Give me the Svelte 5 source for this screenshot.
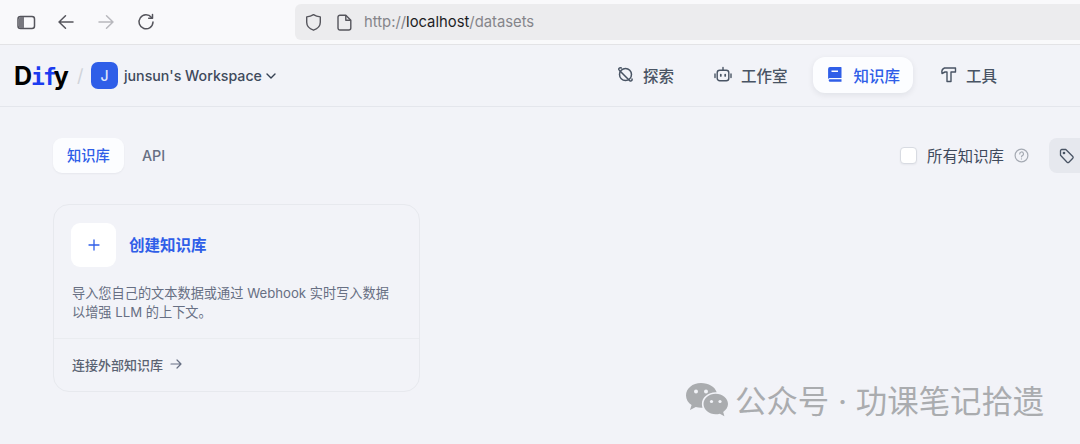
<script>
  const topNav = [
    { label: '探索', icon: 'explore' },
    { label: '工作室', icon: 'robot' },
    { label: '知识库', icon: 'book', active: true },
    { label: '工具', icon: 'tool' }
  ];
</script>

<div class="page">
  <div class="browser">
    <div class="controls">
      <svg width="19" height="15" viewBox="0 0 19 15" fill="none">
        <rect x="1" y="1.500" width="16.500" height="12" rx="2.500" stroke="#55555c" stroke-width="1.500" />
        <path d="M2 3.500a1.500 1.500 0 0 1 1.500-1.500H7v11H3.500A1.500 1.500 0 0 1 2 11.500z" fill="#77777e" />
      </svg>
      <svg class="back" width="18" height="16" viewBox="0 0 18 16" fill="none" stroke="#55555c" stroke-width="1.500" stroke-linecap="round" stroke-linejoin="round">
        <path d="M16 8H2M8.500 1.800 2 8l6.500 6.200" />
      </svg>
      <svg class="forward" width="18" height="16" viewBox="0 0 18 16" fill="none" stroke="#b8b8bd" stroke-width="1.500" stroke-linecap="round" stroke-linejoin="round">
        <path d="M2 8h14M9.500 1.800 16 8l-6.500 6.200" />
      </svg>
      <svg class="reload" width="18" height="18" viewBox="0 0 18 18" fill="none" stroke="#55555c" stroke-width="1.500" stroke-linecap="round" stroke-linejoin="round">
        <path d="M14.500 4.500A7 7 0 1 0 16 9" />
        <path d="M15.500 1.500v3.800h-3.800" />
      </svg>
    </div>
    <div class="urlbar">
      <svg width="17" height="19" viewBox="0 0 17 19" fill="none" stroke="#55555c" stroke-width="1.400" stroke-linejoin="round">
        <path d="M8.500 1.700c2 1.300 4.300 2 6.800 2.200v5.300c0 3.600-2.700 6.500-6.800 8-4.100-1.500-6.800-4.400-6.800-8V3.900c2.500-.2 4.800-.9 6.800-2.200z" />
      </svg>
      <svg class="doc" width="15" height="17" viewBox="0 0 15 17" fill="none" stroke="#55555c" stroke-width="1.400" stroke-linejoin="round">
        <path d="M3 1.200h5.800l5 5V14a2 2 0 0 1-2 2H3a2 2 0 0 1-2-2V3.200a2 2 0 0 1 2-2z" />
        <path d="M8.800 1.200V6.200h5" />
      </svg>
      <span class="url">http://<b>localhost</b>/datasets</span>
    </div>
  </div>

  <header class="topbar">
    <div class="brand">
      <span class="logo">D<span class="logo-if">if</span>y</span>
      <span class="slash">/</span>
      <span class="avatar">J</span>
      <span class="workspace">junsun's Workspace</span>
      <svg width="12" height="12" viewBox="0 0 12 12" fill="none" stroke="#354052" stroke-width="1.400" stroke-linecap="round" stroke-linejoin="round">
        <path d="M2 4l4 4 4-4" />
      </svg>
    </div>
    <nav class="mainnav">
      {#each topNav as item}
        <a class="navitem" class:active={item.active}>
          {#if item.icon === 'explore'}
            <svg width="17" height="17" viewBox="0 0 17 17" fill="none" stroke="#495464" stroke-width="1.500">
              <circle cx="8.500" cy="8.500" r="6" />
              <path d="M2.500 4.500 12.500 14.500M1.800 3.500c-.4-1.400.8-2 2.500-1.500M15 13c.5 1.300-.4 2.300-2 2" stroke-linecap="round" />
            </svg>
          {:else if item.icon === 'robot'}
            <svg width="18" height="17" viewBox="0 0 18 17" fill="none" stroke="#495464" stroke-width="1.400" stroke-linecap="round">
              <rect x="3.200" y="4.200" width="11.600" height="10.600" rx="2.500" />
              <path d="M9 1.500v2.700M1 8v3.500M17 8v3.500" />
              <path d="M6.800 8.500v1.400M11.200 8.500v1.400" stroke-width="1.700" />
            </svg>
          {:else if item.icon === 'book'}
            <svg width="17" height="17" viewBox="1.500 0 17 17" fill="#2f5ee8">
              <path d="M3.500 1h11a.5.5 0 0 1 .5.500V12H3.500a2 2 0 0 0-1.900 1.400V3A2 2 0 0 1 3.500 1zM5 4.500v1.400h6.500V4.500z" fill-rule="evenodd" />
              <path d="M3.500 13.300H15v2.500H3.500a1.250 1.250 0 0 1 0-2.500z" />
            </svg>
          {:else}
            <svg width="17" height="17" viewBox="0 0 17 17" fill="none" stroke="#495464" stroke-width="1.400" stroke-linejoin="round">
              <path d="M4.500 2H15.500V6H11V15.500H7V6H5L2 7.500C1.500 5 2.500 2.800 4.500 2z" />
            </svg>
          {/if}
          <span>{item.label}</span>
        </a>
      {/each}
    </nav>
  </header>

  <main class="content">
    <div class="toolbar">
      <div class="tabs">
        <span class="tab selected">知识库</span>
        <span class="tab">API</span>
      </div>
      <div class="filters">
        <span class="checkbox"></span>
        <span class="filter-label">所有知识库</span>
        <svg class="help" width="15" height="15" viewBox="0 0 15 15" fill="none" stroke="#a5aab3" stroke-width="1.200" stroke-linecap="round">
          <circle cx="7.500" cy="7.500" r="6.400" />
          <path d="M5.700 5.900a1.900 1.900 0 1 1 2.700 1.700c-.6.300-.9.600-.9 1.200" />
          <path d="M7.500 10.800v.1" />
        </svg>
        <span class="tagbtn">
          <svg width="16" height="16" viewBox="0 0 16 16" fill="none" stroke="#495464" stroke-width="1.300" stroke-linejoin="round">
            <path d="M1.500 2.800a1.300 1.300 0 0 1 1.300-1.300h4l7 7a1.300 1.300 0 0 1 0 1.800l-3.900 3.900a1.300 1.300 0 0 1-1.800 0l-6.600-7z" />
            <circle cx="5" cy="5" r=".7" />
          </svg>
        </span>
      </div>
    </div>

    <section class="card">
      <div class="card-body">
        <div class="card-head">
          <span class="plus">
            <svg width="12" height="12" viewBox="0 0 12 12" stroke="#2f5ee8" stroke-width="1.300" stroke-linecap="round">
              <path d="M6 1v10M1 6h10" />
            </svg>
          </span>
          <span class="card-title">创建知识库</span>
        </div>
        <p class="card-desc">导入您自己的文本数据或通过 Webhook 实时写入数据<br />以增强 LLM 的上下文。</p>
      </div>
      <div class="card-foot">
        <span>连接外部知识库</span>
        <svg width="12" height="12" viewBox="0 0 12 12" fill="none" stroke="#676f83" stroke-width="1.200" stroke-linecap="round" stroke-linejoin="round">
          <path d="M1 6h10M7 2l4 4-4 4" />
        </svg>
      </div>
    </section>
  </main>

  <div class="watermark">
    <svg width="44" height="36" viewBox="0 0 44 36">
      <path d="M16 1C7.500 1 1 6.500 1 13.500c0 4 2.200 7.300 5.600 9.600L5 28l5.800-3c1.700.5 3.400.8 5.200.8.500 0 1 0 1.500-.1-.4-1.200-.6-2.400-.6-3.700 0-6.600 6.200-11.700 13.700-11.700h1.100C30.200 5 23.700 1 16 1z" fill="#aaacaf" />
      <path d="M43 22c0-5.700-5.700-10.300-12.300-10.300S18.500 16.300 18.500 22s5.600 10.300 12.200 10.300c1.400 0 2.800-.2 4.100-.6l4.600 2.600-1.200-4.200C41 27.900 43 25.100 43 22z" fill="#aaacaf" />
      <circle cx="11" cy="9.500" r="2" fill="#f2f3f8" />
      <circle cx="21" cy="9.500" r="2" fill="#f2f3f8" />
      <circle cx="26.500" cy="19.500" r="1.600" fill="#f2f3f8" />
      <circle cx="35" cy="19.500" r="1.600" fill="#f2f3f8" />
    </svg>
    <span>公众号 · 功课笔记拾遗</span>
  </div>
</div>

<style>
  :global(body) {
    margin: 0;
    background: #f2f3f8;
  }

  .page {
    position: relative;
    width: 1080px;
    height: 444px;
    overflow: hidden;
    background: #f2f3f8;
    font-family: Inter, "Noto Sans CJK SC", sans-serif;
  }

  .browser {
    display: flex;
    align-items: center;
    height: 44px;
    background: #f9f9fb;
    border-bottom: 1px solid #e3e3e6;
  }

  .controls {
    display: flex;
    align-items: center;
    width: 295px;
    padding-left: 17px;
    box-sizing: border-box;
  }

  .back {
    margin-left: 21px;
  }

  .forward {
    margin-left: 22px;
  }

  .reload {
    margin-left: 22px;
  }

  .urlbar {
    display: flex;
    align-items: center;
    flex: 1;
    height: 36px;
    padding-left: 10px;
    background: #ececee;
    border-radius: 6px 0 0 6px;
  }

  .doc {
    margin-left: 15px;
  }

  .url {
    margin-left: 12px;
    font-size: 14.800px;
    color: #85858a;
  }

  .url b {
    font-weight: 400;
    color: #1d1d1f;
  }

  .topbar {
    display: flex;
    align-items: center;
    height: 61px;
    padding-left: 14px;
    border-bottom: 1px solid #e4e6ec;
  }

  .brand {
    display: flex;
    align-items: center;
    width: 591px;
    color: #3f4a5c;
  }

  .logo {
    width: 63px;
    font-size: 25px;
    font-weight: 700;
    letter-spacing: -1px;
    color: #000;
    white-space: nowrap;
  }

  .logo-if {
    font-family: "DejaVu Sans Mono", monospace;
    font-size: 23px;
    font-weight: 700;
    letter-spacing: -2px;
    margin-right: -1px;
    color: #1c3cf0;
  }

  .slash {
    width: 14px;
    font-size: 18px;
    color: #d0d3da;
  }

  .avatar {
    display: flex;
    align-items: center;
    justify-content: center;
    width: 27px;
    height: 27px;
    border-radius: 7px;
    background: #2f5ee8;
    color: #dfe6fb;
    font-size: 14px;
    font-weight: 500;
  }

  .workspace {
    margin-left: 6px;
    margin-right: 3px;
    font-size: 14.200px;
    font-weight: 500;
  }

  .mainnav {
    display: flex;
    align-items: center;
    margin-bottom: 2px;
  }

  .navitem {
    display: flex;
    align-items: center;
    gap: 9px;
    height: 36px;
    padding: 0 13px 0 12px;
    border-radius: 12px;
    font-size: 15.500px;
    font-weight: 500;
    color: #495464;
  }

  .navitem + .navitem {
    margin-left: 15px;
  }

  .navitem.active {
    margin-left: 12px;
    padding: 0 13px 0 15px;
    background: #fcfdff;
    color: #2f5ee8;
    box-shadow: 0 2px 6px rgba(16, 24, 40, 0.08);
  }

  .content {
    padding: 31px 0 0 53px;
  }

  .toolbar {
    display: flex;
    align-items: center;
    justify-content: space-between;
  }

  .tabs {
    display: flex;
    align-items: center;
    gap: 4px;
  }

  .tab {
    padding: 0 14px;
    line-height: 35px;
    border-radius: 9px;
    font-size: 14.300px;
    font-weight: 500;
    color: #676f83;
  }

  .tab.selected {
    background: #fcfdff;
    color: #2f5ee8;
    box-shadow: 0 1px 2px rgba(16, 24, 40, 0.05);
  }

  .filters {
    display: flex;
    align-items: center;
    flex: none;
    width: 189px;
    margin-right: -9px;
  }

  .checkbox {
    flex: none;
    width: 15px;
    height: 15px;
    background: #fff;
    border: 1px solid #d8dbe2;
    border-radius: 4px;
    box-shadow: 0 1px 2px rgba(16, 24, 40, 0.05);
  }

  .filter-label {
    flex: none;
    margin-left: 10px;
    padding-bottom: 2px;
    font-size: 15.400px;
    color: #3f4a5c;
  }

  .help {
    flex: none;
    margin-left: 10px;
  }

  .tagbtn {
    flex: none;
    display: flex;
    align-items: center;
    width: 40px;
    height: 35px;
    margin-left: 20px;
    padding-left: 10px;
    box-sizing: border-box;
    background: #e6e8ee;
    border-radius: 8px;
  }

  .card {
    display: flex;
    flex-direction: column;
    box-sizing: border-box;
    width: 367px;
    height: 188px;
    margin-top: 31px;
    border: 1px solid #e7e9ee;
    border-radius: 16px;
  }

  .card-body {
    flex: 1;
    padding: 18px 18px 0;
    border-bottom: 1px solid #eaecf0;
  }

  .card-head {
    display: flex;
    align-items: center;
    gap: 13px;
    margin-left: -1px;
  }

  .plus {
    display: flex;
    align-items: center;
    justify-content: center;
    width: 45px;
    height: 44px;
    background: #fff;
    border-radius: 9px;
  }

  .card-title {
    padding-bottom: 2px;
    font-size: 15.500px;
    font-weight: 600;
    color: #2f5ee8;
  }

  .card-desc {
    margin: 17px 0 0;
    font-size: 13.200px;
    line-height: 19px;
    color: #676f83;
    white-space: nowrap;
  }

  .card-foot {
    display: flex;
    align-items: center;
    gap: 7px;
    box-sizing: border-box;
    height: 52px;
    padding: 0 0 2px 18px;
    font-size: 13px;
    font-weight: 500;
    color: #5a6272;
  }

  .watermark {
    position: absolute;
    left: 685px;
    top: 377px;
    display: flex;
    align-items: center;
    gap: 6px;
    font-size: 31.400px;
    color: #aaacaf;
    white-space: nowrap;
  }
</style>
